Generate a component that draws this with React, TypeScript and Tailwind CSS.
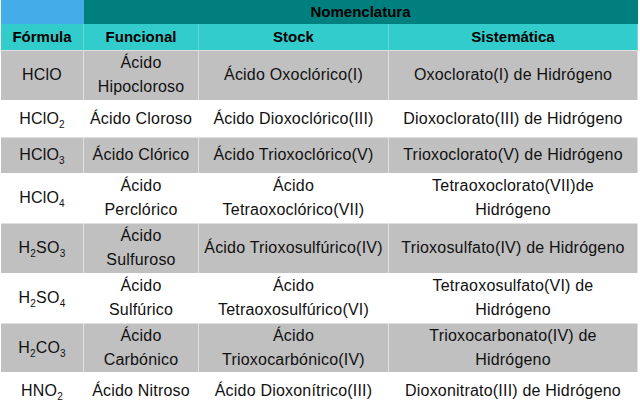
import React from "react";

type Cell = React.ReactNode;

const Sub = ({ children }: { children: React.ReactNode }) => (
  <span className="relative top-[4px] text-[10px] leading-none">{children}</span>
);

const rows: { h: string; gray: boolean; cells: Cell[] }[] = [
  {
    h: "h-[50px]",
    gray: true,
    cells: [
      <>HClO</>,
      <>Ácido<br />Hipocloroso</>,
      <>Ácido Oxoclórico(I)</>,
      <>Oxoclorato(I) de Hidrógeno</>,
    ],
  },
  {
    h: "h-[37px]",
    gray: false,
    cells: [
      <>HClO<Sub>2</Sub></>,
      <>Ácido Cloroso</>,
      <>Ácido Dioxoclórico(III)</>,
      <>Dioxoclorato(III) de Hidrógeno</>,
    ],
  },
  {
    h: "h-[36px]",
    gray: true,
    cells: [
      <>HClO<Sub>3</Sub></>,
      <>Ácido Clórico</>,
      <>Ácido Trioxoclórico(V)</>,
      <>Trioxoclorato(V) de Hidrógeno</>,
    ],
  },
  {
    h: "h-[50px]",
    gray: false,
    cells: [
      <>HClO<Sub>4</Sub></>,
      <>Ácido<br />Perclórico</>,
      <>Ácido<br />Tetraoxoclórico(VII)</>,
      <>Tetraoxoclorato(VII)de<br />Hidrógeno</>,
    ],
  },
  {
    h: "h-[50px]",
    gray: true,
    cells: [
      <>H<Sub>2</Sub>SO<Sub>3</Sub></>,
      <>Ácido<br />Sulfuroso</>,
      <>Ácido Trioxosulfúrico(IV)</>,
      <>Trioxosulfato(IV) de Hidrógeno</>,
    ],
  },
  {
    h: "h-[50px]",
    gray: false,
    cells: [
      <>H<Sub>2</Sub>SO<Sub>4</Sub></>,
      <>Ácido<br />Sulfúrico</>,
      <>Ácido<br />Tetraoxosulfúrico(VI)</>,
      <>Tetraoxosulfato(VI) de<br />Hidrógeno</>,
    ],
  },
  {
    h: "h-[49px]",
    gray: true,
    cells: [
      <>H<Sub>2</Sub>CO<Sub>3</Sub></>,
      <>Ácido<br />Carbónico</>,
      <>Ácido<br />Trioxocarbónico(IV)</>,
      <>Trioxocarbonato(IV) de<br />Hidrógeno</>,
    ],
  },
  {
    h: "h-[37px]",
    gray: false,
    cells: [
      <>HNO<Sub>2</Sub></>,
      <>Ácido Nitroso</>,
      <>Ácido Dioxonítrico(III)</>,
      <>Dioxonitrato(III) de Hidrógeno</>,
    ],
  },
];

export default function App() {
  return (
    <div className="w-[640px] h-[407px] overflow-hidden bg-white font-['Liberation_Sans',Arial,sans-serif] text-[#111]">
      <table className="w-[637px] table-fixed border-collapse">
        <colgroup>
          <col className="w-[83px]" />
          <col className="w-[115px]" />
          <col className="w-[190px]" />
          <col className="w-[249px]" />
        </colgroup>
        <thead>
          <tr className="h-[24px]">
            <th className="bg-[#43adea] p-0"></th>
            <th
              colSpan={3}
              className="bg-[#007f7f] p-0 text-center text-[15px] font-bold leading-[24px] text-black"
            >
              Nomenclatura
            </th>
          </tr>
          <tr className="h-[26px] bg-[#33cccc] text-[15px] font-bold text-black">
            <th className="border-x border-white/25 p-0 text-center leading-[20px]">Fórmula</th>
            <th className="border-x border-white/25 p-0 text-center leading-[20px]">Funcional</th>
            <th className="border-x border-white/25 p-0 text-center leading-[20px]">Stock</th>
            <th className="border-x border-white/25 p-0 text-center leading-[20px]">Sistemática</th>
          </tr>
        </thead>
        <tbody>
          {rows.map((r, i) => (
            <tr key={i} className={`${r.h} ${r.gray ? "bg-[#c0c0c0]" : "bg-white"}`}>
              {r.cells.map((c, j) => (
                <td
                  key={j}
                  className="border border-white/50 p-0 text-center align-middle text-[16px] leading-[24px] tracking-[0.2px] whitespace-nowrap"
                >
                  {c}
                </td>
              ))}
            </tr>
          ))}
        </tbody>
      </table>
    </div>
  );
}
